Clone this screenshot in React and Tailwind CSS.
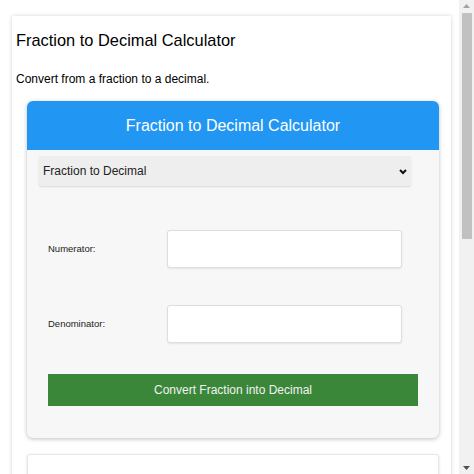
import { useState } from "react";

// Fraction to Decimal page
export default function App() {
  const [mode, setMode] = useState("f2d");
  const [numerator, setNumerator] = useState("");
  const [denominator, setDenominator] = useState("");

  return (
    <div className="flex h-[474px] overflow-hidden bg-white font-['Liberation_Sans',Arial,sans-serif] text-black">
      <div className="flex-1 pt-4 pl-3 pr-2">
        <div className="min-h-[914px] bg-white pl-1 pr-3 pt-[14px] shadow-[0_0_4px_rgba(0,0,0,0.18)]">
          <h1 className="text-[16.4px] leading-[20px] font-normal">Fraction to Decimal Calculator</h1>
          <p className="mt-[21px] text-[12px] leading-[16px]">Convert from a fraction to a decimal.</p>

          {/* Calculator card */}
          <div className="mt-[14px] ml-[11px] rounded-[6px] bg-[#f7f7f7] shadow-[0_1px_4px_rgba(0,0,0,0.25)]">
            <div className="flex h-[49px] items-center justify-center rounded-t-[6px] bg-[#2196f3] text-[16px] text-white">
              Fraction to Decimal Calculator
            </div>
            <div className="pt-[6px] pb-[32px]">
              <div className="relative ml-3 mr-[28px]">
                <select
                  value={mode}
                  onChange={(e) => setMode(e.target.value)}
                  className="h-[30px] w-full appearance-none rounded-[2px] bg-[#eeeeee] pl-1 text-[12px] text-[#222] shadow-[0_1px_2px_rgba(0,0,0,0.12)] outline-none"
                >
                  <option value="f2d">Fraction to Decimal</option>
                  <option value="d2f">Decimal to Fraction</option>
                </select>
                <svg
                  className="pointer-events-none absolute right-[4px] top-[13px]"
                  width="8"
                  height="6"
                  viewBox="0 0 8 6"
                >
                  <path d="M1 1 L4 4 L7 1" fill="none" stroke="#111" strokeWidth="2" />
                </svg>
              </div>

              <div className="mt-[44px] flex items-center pl-[21px]">
                <label className="w-[119px] text-[9.5px] text-[#222]">Numerator:</label>
                <input
                  value={numerator}
                  onChange={(e) => setNumerator(e.target.value)}
                  className="h-[38px] w-[235px] rounded-[3px] border border-[#dedede] bg-white shadow-[0_1px_2px_rgba(0,0,0,0.08)] outline-none"
                />
              </div>
              <div className="mt-[37px] flex items-center pl-[21px]">
                <label className="w-[119px] text-[9.5px] text-[#222]">Denominator:</label>
                <input
                  value={denominator}
                  onChange={(e) => setDenominator(e.target.value)}
                  className="h-[38px] w-[235px] rounded-[3px] border border-[#dedede] bg-white shadow-[0_1px_2px_rgba(0,0,0,0.08)] outline-none"
                />
              </div>

              <div className="mt-[31px] px-[21px]">
                <button className="flex h-[32px] w-full items-center justify-center bg-[#3a873a] text-[12px] text-[#f2f2f2]">
                  Convert Fraction into Decimal
                </button>
              </div>
            </div>
          </div>

          {/* Result card */}
          <div className="mt-4 ml-[11px] h-[300px] rounded-[3px] border border-[#e6e6e6] bg-white shadow-[0_1px_3px_rgba(0,0,0,0.12)]" />
        </div>
      </div>

      {/* Window scrollbar */}
      <div className="flex w-[15px] flex-col items-center bg-[#f1f1f1]">
        <svg className="mt-[4px]" width="7" height="4" viewBox="0 0 7 4">
          <path d="M0 4 L3.5 0 L7 4 Z" fill="#a3a3a3" />
        </svg>
        <div className="mt-[5px] h-[226px] w-[10px] rounded-[1px] bg-[#c1c1c1]" />
        <div className="flex-1" />
        <svg className="mb-[4px]" width="7" height="4" viewBox="0 0 7 4">
          <path d="M0 0 L7 0 L3.5 4 Z" fill="#505050" />
        </svg>
      </div>
    </div>
  );
}
